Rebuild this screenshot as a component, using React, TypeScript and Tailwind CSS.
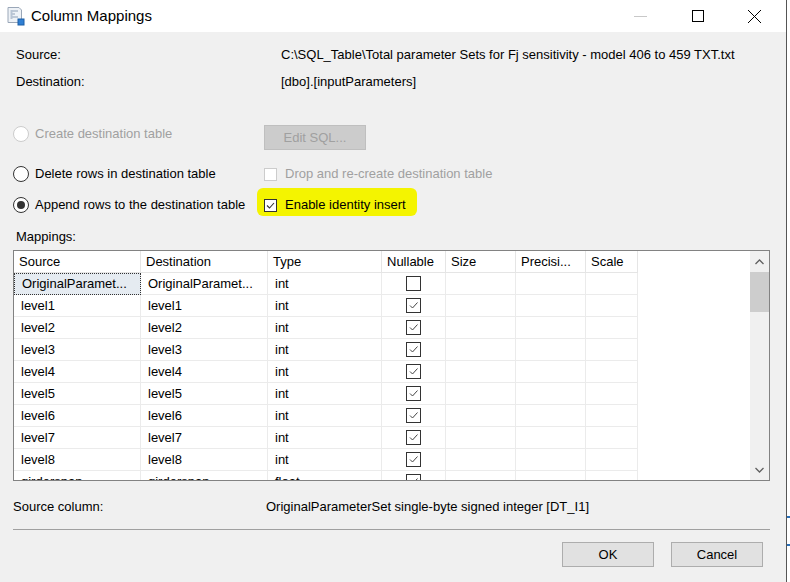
import React from "react";

const rows = [
  { src: "OriginalParamet...", dst: "OriginalParamet...", type: "int", nullable: false },
  { src: "level1", dst: "level1", type: "int", nullable: true },
  { src: "level2", dst: "level2", type: "int", nullable: true },
  { src: "level3", dst: "level3", type: "int", nullable: true },
  { src: "level4", dst: "level4", type: "int", nullable: true },
  { src: "level5", dst: "level5", type: "int", nullable: true },
  { src: "level6", dst: "level6", type: "int", nullable: true },
  { src: "level7", dst: "level7", type: "int", nullable: true },
  { src: "level8", dst: "level8", type: "int", nullable: true },
  { src: "girderspan", dst: "girderspan", type: "float", nullable: true },
];

function Radio({ checked, disabled }: { checked?: boolean; disabled?: boolean }) {
  return (
    <span
      className={`flex h-[16px] w-[16px] shrink-0 items-center justify-center rounded-full border bg-white ${
        disabled ? "border-[#cccccc]" : "border-[#333333]"
      }`}
    >
      {checked && <span className="h-[8px] w-[8px] rounded-full bg-[#333333]" />}
    </span>
  );
}

function Check({ checked, disabled }: { checked?: boolean; disabled?: boolean }) {
  return (
    <span
      className={`flex h-[13px] w-[13px] shrink-0 items-center justify-center border ${
        disabled ? "border-[#cccccc] bg-white" : "border-[#333333] bg-white"
      }`}
    >
      {checked && (
        <svg width="11" height="11" viewBox="0 0 11 11">
          <path d="M2 5.5 L4.5 8 L9 3" fill="none" stroke="#333333" strokeWidth="1.1" />
        </svg>
      )}
    </span>
  );
}

function GridCheck({ checked }: { checked: boolean }) {
  return (
    <span className="flex h-[15px] w-[15px] items-center justify-center border border-[#333333] bg-white">
      {checked && (
        <svg width="11" height="11" viewBox="0 0 11 11">
          <path d="M2 5.5 L4.5 8 L9.5 2.5" fill="none" stroke="#444444" strokeWidth="1" />
        </svg>
      )}
    </span>
  );
}

function TitleIcon() {
  return (
    <svg width="20" height="20" viewBox="0 0 20 20">
      <path d="M2 1.5 H13 L15.5 4 V16.5 H2 Z" fill="#eef2f7" stroke="#9aa7b8" />
      <path d="M5 5 H12 M5 8 H9 M5 11 H12" stroke="#8ea0b6" strokeWidth="1" />
      <rect x="4.5" y="4" width="2" height="9" fill="#b7c4d4" />
      <rect x="12" y="13" width="6" height="6" fill="#2f7fd3" stroke="#1d5fa6" />
    </svg>
  );
}

const cols = [127, 127, 114, 64, 70, 70, 52];

export default function App() {
  return (
    <div
      className="flex h-[582px] w-[790px] overflow-hidden bg-white text-[13px] text-black"
      style={{ fontFamily: '"Liberation Sans", Arial, sans-serif' }}
    >
      <div className="flex w-[786px] shrink-0 flex-col bg-[#f0f0f0]">
        {/* title bar */}
        <div className="flex h-[32px] items-center bg-white pl-[6px] pr-[3px]">
          <TitleIcon />
          <span className="ml-[5px] text-[15px]">Column Mappings</span>
          <div className="ml-auto flex h-full items-center">
            <div className="flex h-full w-[57px] items-center justify-center">
              <span className="h-px w-[13px] bg-[#c8c8c8]" />
            </div>
            <div className="flex h-full w-[57px] items-center justify-center">
              <span className="h-[12px] w-[12px] border border-black" />
            </div>
            <div className="flex h-full w-[57px] items-center justify-center">
              <svg width="15" height="15" viewBox="0 0 15 15">
                <path d="M1 1 L14 14 M14 1 L1 14" stroke="#000" strokeWidth="1" />
              </svg>
            </div>
          </div>
        </div>

        {/* body */}
        <div className="flex flex-col px-[13px] pt-[12px]">
          <div className="flex h-[22px] items-center">
            <span className="w-[268px] pl-[3px]">Source:</span>
            <span>C:\SQL_Table\Total parameter Sets for Fj sensitivity - model 406 to 459 TXT.txt</span>
          </div>
          <div className="mt-[5px] flex h-[22px] items-center">
            <span className="w-[268px] pl-[3px]">Destination:</span>
            <span>[dbo].[inputParameters]</span>
          </div>

          <div className="mt-[32px] flex h-[26px] items-start">
            <div className="flex h-[18px] w-[251px] items-center gap-[6px]">
              <Radio disabled />
              <span className="text-[#a0a0a0]">Create destination table</span>
            </div>
            <div className="flex h-[25px] w-[102px] items-center justify-center border border-[#bfbfbf] bg-[#cccccc] text-[#a0a0a0]">
              Edit SQL...
            </div>
          </div>

          <div className="mt-[12px] flex h-[22px] items-center">
            <div className="flex w-[251px] items-center gap-[6px]">
              <Radio />
              <span>Delete rows in destination table</span>
            </div>
            <div className="flex items-center gap-[8px]">
              <Check disabled />
              <span className="text-[#a0a0a0]">Drop and re-create destination table</span>
            </div>
          </div>

          <div className="mt-[9px] flex h-[22px] items-center">
            <div className="flex w-[251px] items-center gap-[6px]">
              <Radio checked />
              <span>Append rows to the destination table</span>
            </div>
            <div className="relative flex items-center gap-[8px]">
              <span className="absolute left-[-7px] top-[-7px] h-[28px] w-[160px] rounded-[6px] bg-[#f4f400]" />
              <span className="relative">
                <Check checked />
              </span>
              <span className="relative">Enable identity insert</span>
            </div>
          </div>

          <div className="mt-[12px] flex h-[18px] items-center pl-[3px]">Mappings:</div>

          {/* grid */}
          <div className="mt-[4px] flex h-[231px] w-[757px] overflow-hidden border border-[#828282] bg-white">
            <div className="flex flex-1 flex-col overflow-hidden">
              <div className="flex h-[22px] shrink-0">
                {["Source", "Destination", "Type", "Nullable", "Size", "Precisi...", "Scale"].map((h, i) => (
                  <div
                    key={h}
                    className="flex shrink-0 items-center border-r border-b border-[#e5e5e5] px-[5px]"
                    style={{ width: cols[i] }}
                  >
                    {h}
                  </div>
                ))}
              </div>
              {rows.map((r, ri) => (
                <div key={ri} className="flex h-[22px] shrink-0">
                  <div
                    className={`flex shrink-0 items-center border-r border-b px-[7px] ${
                      ri === 0
                        ? "border border-dotted border-[#333333] bg-[#e5ebf1]"
                        : "border-[#ebebeb]"
                    }`}
                    style={{ width: cols[0] }}
                  >
                    {r.src}
                  </div>
                  <div className="flex shrink-0 items-center border-r border-b border-[#ebebeb] px-[7px]" style={{ width: cols[1] }}>
                    {r.dst}
                  </div>
                  <div className="flex shrink-0 items-center border-r border-b border-[#ebebeb] px-[7px]" style={{ width: cols[2] }}>
                    {r.type}
                  </div>
                  <div className="flex shrink-0 items-center justify-center border-r border-b border-[#ebebeb]" style={{ width: cols[3] }}>
                    <GridCheck checked={r.nullable} />
                  </div>
                  <div className="shrink-0 border-r border-b border-[#ebebeb]" style={{ width: cols[4] }} />
                  <div className="shrink-0 border-r border-b border-[#ebebeb]" style={{ width: cols[5] }} />
                  <div className="shrink-0 border-r border-b border-[#ebebeb]" style={{ width: cols[6] }} />
                </div>
              ))}
            </div>
            {/* scrollbar */}
            <div className="flex w-[19px] shrink-0 flex-col bg-[#f0f0f0]">
              <div className="flex h-[21px] items-center justify-center">
                <svg width="9" height="6" viewBox="0 0 9 6">
                  <path d="M0.5 5 L4.5 1 L8.5 5" fill="none" stroke="#606060" strokeWidth="1.3" />
                </svg>
              </div>
              <div className="h-[40px] bg-[#cdcdcd]" />
              <div className="flex-1" />
              <div className="flex h-[21px] items-center justify-center">
                <svg width="9" height="6" viewBox="0 0 9 6">
                  <path d="M0.5 1 L4.5 5 L8.5 1" fill="none" stroke="#606060" strokeWidth="1.3" />
                </svg>
              </div>
            </div>
          </div>

          <div className="mt-[15px] flex h-[22px] items-center">
            <span className="w-[253px]">Source column:</span>
            <span>OriginalParameterSet single-byte signed integer [DT_I1]</span>
          </div>

          <div className="mt-[11px] h-px w-[757px] bg-[#a0a0a0]" />

          <div className="mt-[12px] flex w-[750px] justify-end gap-[17px]">
            <div className="flex h-[25px] w-[92px] items-center justify-center border border-[#adadad] bg-[#e1e1e1]">OK</div>
            <div className="flex h-[25px] w-[92px] items-center justify-center border border-[#adadad] bg-[#e1e1e1]">Cancel</div>
          </div>
        </div>
      </div>
      <div className="w-px shrink-0 bg-[#555555]" />
      <div className="flex flex-1 flex-col bg-white">
        <div className="mt-[516px] h-[2px] bg-[#2a6fb8]" />
        <div className="mt-[26px] h-[2px] bg-[#2a6fb8]" />
      </div>
    </div>
  );
}
